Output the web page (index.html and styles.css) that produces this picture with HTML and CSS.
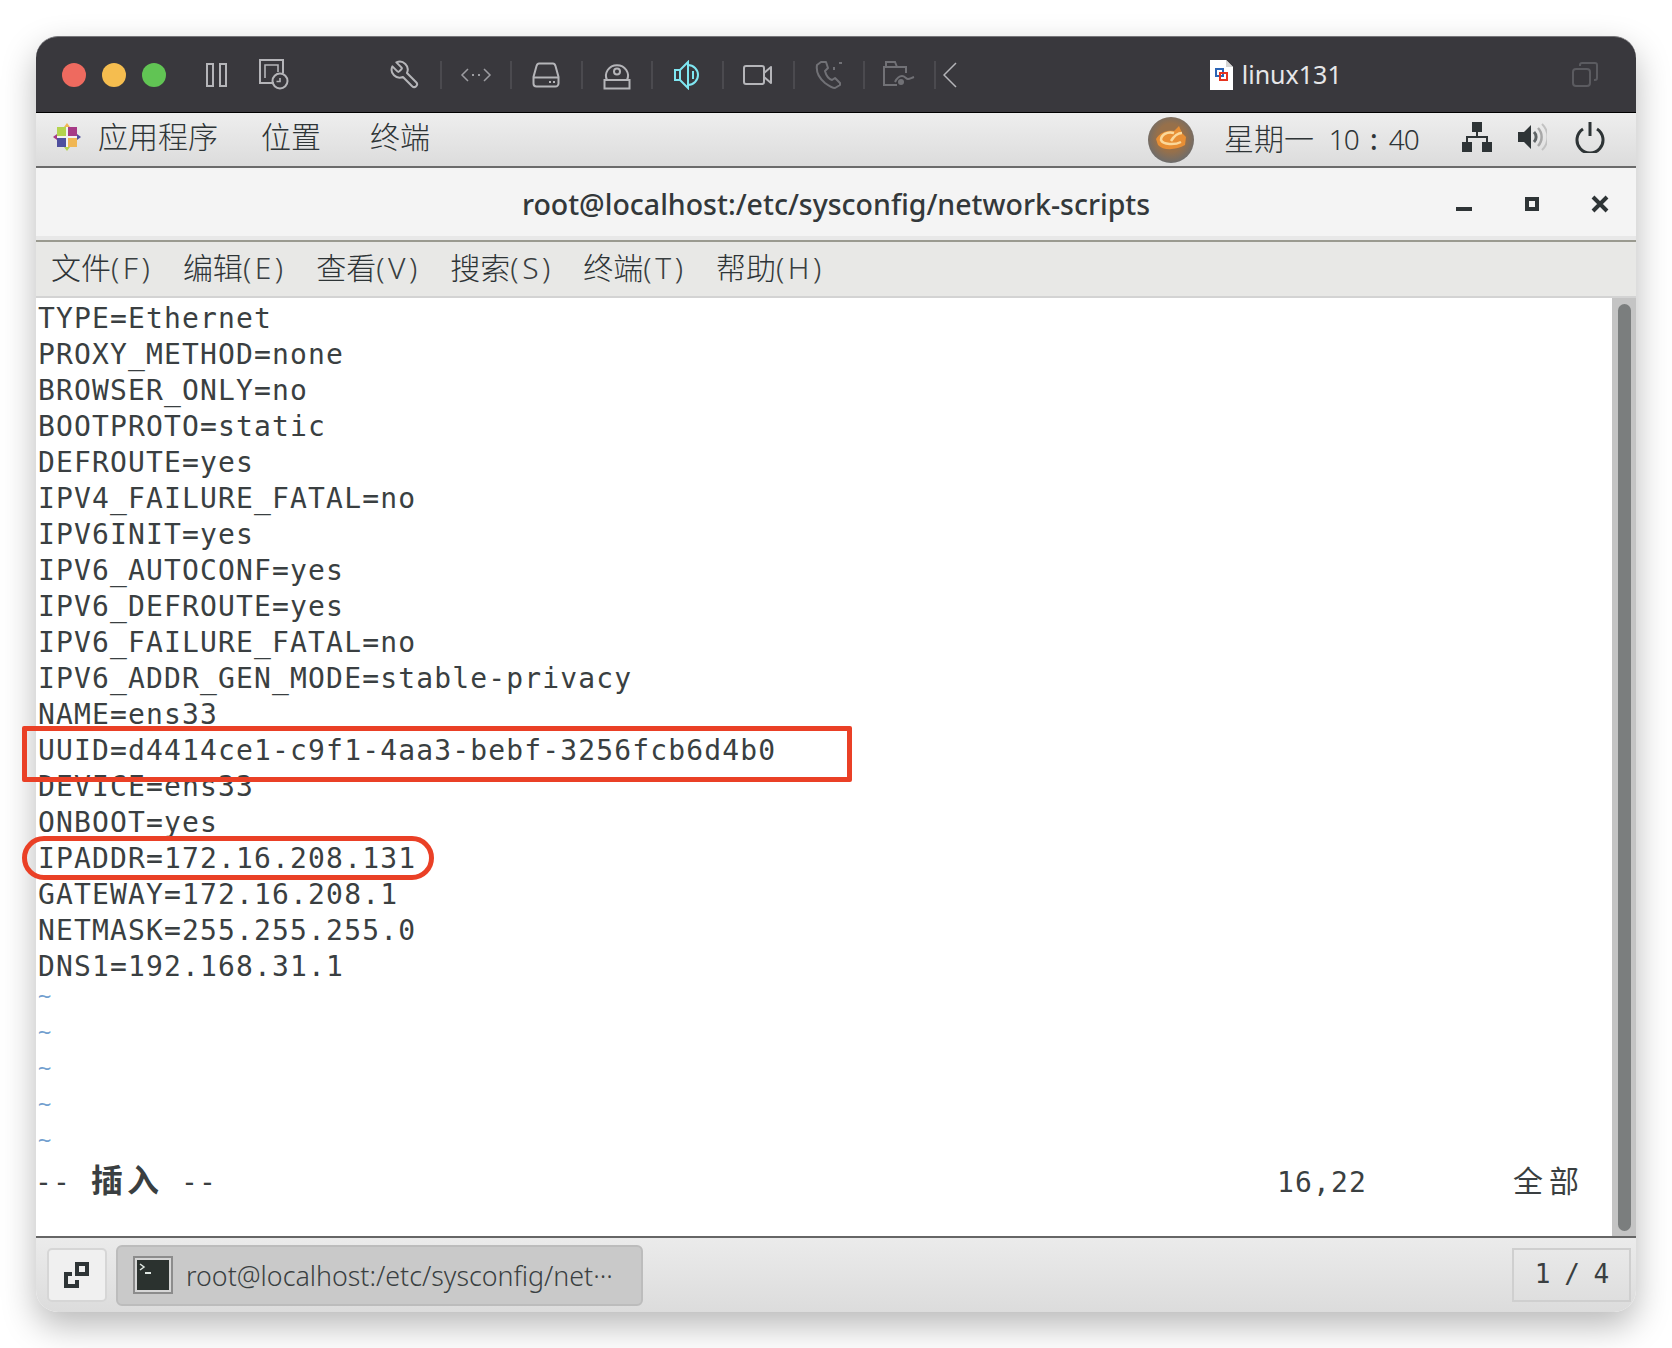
FILE: index.html
```html
<!DOCTYPE html>
<html lang="zh-CN">
<head>
<meta charset="utf-8">
<title>linux131</title>
<link rel="stylesheet" href="styles.css">
</head>
<body>
<div class="window">
  <header class="machine">
    <div class="lights"><span class="light red"></span><span class="light yellow"></span><span class="light green"></span></div>
    <svg class="m-pause" width="22" height="26" viewBox="0 0 22 26"><g fill="none" stroke="#b5b5b9" stroke-width="2"><rect x="1" y="2" width="6" height="22"/><rect x="14" y="2" width="6" height="22"/></g></svg>
    <svg class="m-snap" width="30" height="32" viewBox="0 0 30 32"><g fill="none" stroke="#b5b5b9" stroke-width="2"><path d="M15 24H1V1h23v13"/><path d="M6 19V6h13v7" stroke-width="1.6"/><circle cx="21" cy="22" r="7.5"/><path d="M21 19v3.500h-3.500" stroke-width="1.600"/></g></svg>
    <div class="tools">
      <div class="tool"><svg width="32" height="32" viewBox="0 0 24 24"><g transform="matrix(-1 0 0 1 24 0)"><path fill="none" stroke="#b5b5b9" stroke-width="1.500" stroke-linejoin="round" d="M14.700 6.300a1 1 0 0 0 0 1.400l1.600 1.600a1 1 0 0 0 1.400 0l3.770-3.770a6 6 0 0 1-7.940 7.940l-6.910 6.910a2.120 2.120 0 0 1-3-3l6.910-6.910a6 6 0 0 1 7.940-7.940l-3.760 3.760z"/></g></svg></div>
      <div class="tool"><svg width="32" height="16" viewBox="0 0 32 16"><g fill="none" stroke="#9c9ca1" stroke-width="1.500"><path d="M8 2 2 8l6 6M24 2l6 6-6 6"/></g><g fill="#9c9ca1"><rect x="12" y="7" width="2" height="2"/><rect x="18" y="7" width="2" height="2"/></g></svg></div>
      <div class="tool"><svg width="28" height="26" viewBox="0 0 28 26"><g fill="none" stroke="#b5b5b9" stroke-width="2"><path d="M7 1.500h14c1.500 0 2 1 2.500 2.500L26.500 15v6.500a3 3 0 0 1-3 3h-19a3 3 0 0 1-3-3V15L4.500 4C5 2.500 5.500 1.500 7 1.500z"/><path d="M1.500 15.500h25"/></g><g fill="#b5b5b9"><rect x="17" y="19" width="2" height="2"/><rect x="21" y="19" width="2" height="2"/></g></svg></div>
      <div class="tool"><svg width="28" height="30" viewBox="0 0 28 30"><g fill="none" stroke="#b5b5b9" stroke-width="2"><path d="M4 20a11 10.500 0 1 1 20 0"/><circle cx="14" cy="11.500" r="3"/><rect x="1.500" y="20" width="25" height="8.500"/></g></svg></div>
      <div class="tool"><svg width="28" height="30" viewBox="0 0 28 30"><g fill="none" stroke="#7fe6f2" stroke-width="2"><path d="M1 10h5v10H1z"/><path d="M6 10 14 2v26l-8-8"/><path d="M14 5a10 10 0 0 1 0 20"/><path d="M19 11v8"/></g></svg></div>
      <div class="tool"><svg width="30" height="24" viewBox="0 0 30 24"><g fill="none" stroke="#b5b5b9" stroke-width="2" stroke-linejoin="round"><rect x="1" y="3" width="20" height="18" rx="2"/><path d="M21 10l7-6v16l-7-6z"/></g></svg></div>
      <div class="tool"><svg width="28" height="30" viewBox="0 0 28 30"><g fill="none" stroke="#717176" stroke-width="2" stroke-linejoin="round"><path d="M6 2 2 5c-1 6 2 13 8 18 4 3 8 5 10 5l5-3v-2l-5-5-3 2c-3-1-6-5-7-9l3-3-2-6z"/></g><g fill="#717176"><rect x="18" y="7" width="2" height="3"/><rect x="24" y="2" width="3" height="2"/></g></svg></div>
      <div class="tool"><svg width="32" height="28" viewBox="0 0 32 28"><g fill="none" stroke="#717176" stroke-width="2"><path d="M14 24H1V6h22v6"/><path d="M3 6V1h9l2 5"/><path d="M12 21c2-4 4-6 7-6s4 3 6 3 3-1 6-2"/></g><circle cx="18" cy="21" r="3" fill="#717176"/></svg></div>
    </div>
    <svg class="m-back" width="14" height="26" viewBox="0 0 14 26"><path d="M13 1 1 13l12 12" fill="none" stroke="#b5b5b9" stroke-width="1.500"/></svg>
    <div class="m-name">
      <svg width="24" height="32" viewBox="0 0 24 32"><path fill="#fff" d="M0 1h16l7 7v23H0z"/><path fill="#d5d5d5" d="M16 1l7 7h-7z"/><rect x="6" y="10" width="7" height="7" fill="none" stroke="#2b64b5" stroke-width="2"/><rect x="10" y="14" width="7" height="7" fill="none" stroke="#e6331f" stroke-width="2"/></svg>
      <span>linux131</span>
    </div>
    <svg class="m-copy" width="26" height="26" viewBox="0 0 26 26"><g fill="none" stroke="#5b5b60" stroke-width="2"><rect x="1" y="7" width="17" height="17" rx="3"/><path d="M8 4V3a2 2 0 0 1 2-2h13a2 2 0 0 1 2 2v13a2 2 0 0 1-2 2h-1"/></g></svg>
  </header>

  <nav class="panel">
    <svg class="logo" width="30" height="30" viewBox="0 0 30 30"><rect x="5" y="5" width="9" height="9" fill="#b4d34e"/><rect x="16" y="5" width="9" height="9" fill="#a63a86"/><rect x="5" y="16" width="9" height="9" fill="#4f4f9e"/><rect x="16" y="16" width="9" height="9" fill="#f0b653"/><path d="M15 1l3 4h-6z" fill="#f0b653"/><path d="M29 15l-4 3v-6z" fill="#4f4f9e"/><path d="M15 29l-3-4h6z" fill="#b4d34e"/><path d="M1 15l4-3v6z" fill="#a63a86"/><path d="M15 5v20M5 15h20" stroke="#f2f2f2" stroke-width="2"/></svg>
    <span class="p-item first">应用程序</span>
    <span class="p-item second">位置</span>
    <span class="p-item third">终端</span>
    <div class="p-right">
      <svg class="ball" width="48" height="50" viewBox="0 0 48 50"><defs><radialGradient id="bg" cx=".5" cy=".45" r=".55"><stop offset=".55" stop-color="#97704a"/><stop offset="1" stop-color="#6c6c6c"/></radialGradient></defs><circle cx="24" cy="25" r="23" fill="url(#bg)"/><path d="M9 24c4-7 12-9 18-8l5-5 3 7 4 4-1 8c-8 5-22 6-27 0z" fill="#e88f35"/><g fill="none" stroke="#fbd89a" stroke-width="2.500" stroke-linejoin="round"><path d="M27 18c-7-2-13 2-13 7 2 5 14 5 20 2"/><path d="M35 18c-5 0-8 3-11 8"/></g></svg>
      <span class="clock">星期一 <span class="num hour">10</span><span class="colon">:</span><span class="num">40</span></span>
      <svg class="p-net" width="30" height="32" viewBox="0 0 30 32"><g fill="#2e3436"><rect x="10" y="1" width="10" height="10"/><rect x="0" y="21" width="10" height="10"/><rect x="20" y="21" width="10" height="10"/></g><path d="M15 11v5M5 21v-5h20v5" fill="none" stroke="#2e3436" stroke-width="2"/></svg>
      <svg class="p-vol" width="30" height="30" viewBox="0 0 30 30"><path d="M1 10h6l7-7v24l-7-7H1z" fill="#2e3436"/><path d="M17 10a7 7 0 0 1 0 10" fill="none" stroke="#5f6466" stroke-width="3"/><path d="M21 6a13 13 0 0 1 0 18" fill="none" stroke="#a8a8a8" stroke-width="2.500"/><path d="M25 2a18 18 0 0 1 0 26" fill="none" stroke="#c2c2c2" stroke-width="2"/></svg>
      <svg class="p-pow" width="30" height="32" viewBox="0 0 30 32"><g fill="none" stroke="#2e3436" stroke-width="3"><path d="M8 8a13 13 0 1 0 14 0"/><path d="M15 1v14"/></g></svg>
    </div>
  </nav>

  <div class="wintitle">
    <span class="wt-text">root@localhost:/etc/sysconfig/network-scripts</span>
    <div class="wt-ctrl">
      <svg width="18" height="18" viewBox="0 0 18 18"><rect x="1" y="12" width="16" height="4" fill="#2e3436"/></svg>
      <svg width="14" height="14" viewBox="0 0 14 14"><rect x="2" y="2" width="10" height="10" fill="none" stroke="#2e3436" stroke-width="4"/></svg>
      <svg width="18" height="18" viewBox="0 0 18 18"><path d="M2 2l14 14M16 2 2 16" stroke="#2e3436" stroke-width="4"/></svg>
    </div>
  </div>

  <nav class="menu">
    <span>文件<i>(F)</i></span><span>编辑<i>(E)</i></span><span>查看<i>(V)</i></span><span>搜索<i>(S)</i></span><span>终端<i>(T)</i></span><span>帮助<i>(H)</i></span>
  </nav>

  <main class="body">
    <div class="term">
      <div class="line">TYPE=Ethernet</div>
      <div class="line">PROXY_METHOD=none</div>
      <div class="line">BROWSER_ONLY=no</div>
      <div class="line">BOOTPROTO=static</div>
      <div class="line">DEFROUTE=yes</div>
      <div class="line">IPV4_FAILURE_FATAL=no</div>
      <div class="line">IPV6INIT=yes</div>
      <div class="line">IPV6_AUTOCONF=yes</div>
      <div class="line">IPV6_DEFROUTE=yes</div>
      <div class="line">IPV6_FAILURE_FATAL=no</div>
      <div class="line">IPV6_ADDR_GEN_MODE=stable-privacy</div>
      <div class="line">NAME=ens33</div>
      <div class="line">UUID=d4414ce1-c9f1-4aa3-bebf-3256fcb6d4b0</div>
      <div class="line">DEVICE=ens33</div>
      <div class="line">ONBOOT=yes</div>
      <div class="line">IPADDR=172.16.208.131</div>
      <div class="line">GATEWAY=172.16.208.1</div>
      <div class="line">NETMASK=255.255.255.0</div>
      <div class="line">DNS1=192.168.31.1</div>
      <div class="line tilde">~</div>
      <div class="line tilde">~</div>
      <div class="line tilde">~</div>
      <div class="line tilde">~</div>
      <div class="line tilde">~</div>
      <div class="line status"><span class="mode">-- <b>插入</b> --</span><span>16,22</span><span class="zh">全部</span></div>
      <div class="mark mark-box"></div>
      <div class="mark mark-round"></div>
    </div>
    <div class="scroll"><div class="thumb"></div></div>
  </main>

  <footer class="taskbar">
    <div class="show-desk"><svg width="28" height="28" viewBox="0 0 28 28"><g fill="none" stroke="#2e3436" stroke-width="4"><rect x="14" y="3" width="10" height="10"/><path d="M9 13H3v12h11v-6"/></g></svg></div>
    <div class="task">
      <svg width="40" height="38" viewBox="0 0 40 38"><rect x="1" y="1" width="38" height="36" fill="#d6d6d6" stroke="#8c8c8c" stroke-width="2"/><rect x="4" y="4" width="32" height="30" fill="#2b322f"/><path d="M7 8l4 3-4 3" fill="none" stroke="#dfe7e2" stroke-width="1.500"/><path d="M12 17h6" stroke="#dfe7e2" stroke-width="2"/></svg>
      <span>root@localhost:/etc/sysconfig/net···</span>
    </div>
    <div class="pager">1 / 4</div>
  </footer>
</div>
</body>
</html>
```

FILE: styles.css
```css
* { box-sizing: border-box; }
html, body { margin: 0; background: #fff; }
body { padding: 36px 36px 0; height: 1348px; overflow: hidden; }

.window {
  width: 1600px;
  height: 1276px;
  display: flex;
  flex-direction: column;
  border-radius: 22px;
  box-shadow: 0 14px 34px rgba(0, 0, 0, .28);
  font-family: "Noto Sans", "Noto Sans CJK SC", sans-serif;
  color: #2e3436;
}

/* machine toolbar */
.machine {
  height: 77px;
  flex: none;
  display: flex;
  align-items: center;
  padding-left: 26px;
  background: #39383d;
  border-top: 1px solid #77767a;
  border-bottom: 1px solid #000;
  border-radius: 22px 22px 0 0;
}
.lights { display: flex; gap: 16px; }
.light { width: 24px; height: 24px; border-radius: 50%; }
.red { background: #ee6a5f; }
.yellow { background: #f5bd4f; }
.green { background: #61c454; }
.m-pause { margin-left: 40px; }
.m-snap { margin-left: 31px; }
.tools { display: flex; margin-left: 82px; }
.tool {
  width: 70.6px;
  height: 28px;
  display: flex;
  align-items: center;
  justify-content: center;
  border-right: 2px solid #4b4a4f;
}
.m-back { margin-left: 7px; }
.m-name {
  display: flex;
  align-items: center;
  gap: 8px;
  margin-left: 253px;
  color: #e6e6e8;
  font-size: 25px;
}
.m-name span { padding-bottom: 2px; }
.m-copy { margin-left: 230px; }

/* GNOME panel */
.panel {
  height: 55px;
  flex: none;
  display: flex;
  align-items: center;
  padding: 0 0 6px 16px;
  background: linear-gradient(#eeeeee, #dcdcdc);
  border-bottom: 2px solid #6b6b6b;
  font-size: 30px;
}
.p-item { line-height: 44px; font-weight: 300; }
.p-item.first { margin-left: 16px; }
.p-item.second { margin-left: 43px; }
.p-item.third { margin-left: 49px; }
.p-right { margin-left: auto; display: flex; align-items: center; }
.ball { margin: 6px 29px 0 0; }
.clock { width: 195px; white-space: nowrap; font-weight: 300; }
.num { font-size: 28px; font-weight: 300; letter-spacing: -1px; }
.hour { margin-left: 7px; }
.colon { display: inline-block; width: 30px; text-align: center; font-size: 28px; font-weight: 500; }
.p-net { margin-left: 43px; }
.p-vol { margin-left: 25px; }
.p-pow { margin-left: 28px; margin-right: 31px; }

/* window title */
.wintitle {
  height: 74px;
  flex: none;
  display: flex;
  align-items: center;
  justify-content: center;
  position: relative;
  background: #f4f4f4;
  border-bottom: 2px solid #9a9a90;
  box-shadow: inset 0 -4px 0 #e8e8e8;
}
.wt-text { font-size: 28.500px; font-weight: 500; color: #33383a; }
.wt-ctrl {
  position: absolute;
  right: 27px;
  top: 27px;
  display: flex;
  align-items: center;
  gap: 52px;
}

/* menu */
.menu {
  height: 56px;
  flex: none;
  display: flex;
  align-items: center;
  gap: 29.500px;
  padding: 0 0 6px 15px;
  background: #e8e8e6;
  border-bottom: 2px solid #d3d3d3;
  font-size: 30px;
  font-weight: 300;
}
.menu i { font-style: normal; font-size: 30px; letter-spacing: 3.500px; font-weight: 300; color: #3a3f41; }

/* terminal */
.body { flex: 1; min-height: 0; display: flex; }
.term {
  flex: 1;
  position: relative;
  background: #fff;
  padding: 3px 0 0 2px;
  font-family: "DejaVu Sans Mono", "Noto Sans CJK SC", monospace;
  font-size: 28px;
  letter-spacing: 1.150px;
  color: #3a3f41;
}
.line { height: 36px; line-height: 36px; white-space: pre; }
.tilde { color: #729fcf; font-size: 22px; line-height: 22px; }
.status { display: grid; grid-template-columns: 1239px 236px auto; align-items: start; font-size: 28px; }
.mode { margin-left: -3px; }
.status b { font-family: "Noto Sans CJK SC", sans-serif; font-size: 32px; line-height: 0; margin-left: 2px; letter-spacing: 4px; font-weight: 700; }
.zh { font-family: "Noto Sans CJK SC", sans-serif; font-size: 30px; line-height: 28px; letter-spacing: 6px; }

.mark { position: absolute; border: 5px solid #ea4026; pointer-events: none; }
.mark-box { left: -14px; top: 428px; width: 830px; height: 56px; border-radius: 2px; }
.mark-round { left: -14px; top: 538px; width: 412px; height: 44px; border-radius: 22px; }

.scroll { width: 24px; flex: none; background: #c4c4c4; padding: 6px 5px 5px 6px; }
.thumb { height: 100%; background: #7b7e7e; border-radius: 7px; }

/* taskbar */
.taskbar {
  height: 76px;
  flex: none;
  display: flex;
  align-items: center;
  padding: 0 5px 0 11px;
  background: linear-gradient(#ebebeb, #dcdcdc);
  border-top: 2px solid #666;
  border-radius: 0 0 22px 22px;
}
.show-desk {
  width: 60px;
  height: 54px;
  display: flex;
  align-items: center;
  justify-content: center;
  border: 2px solid #d6d6d6;
  border-radius: 5px;
  background: #f0f0f0;
}
.task {
  width: 527px;
  height: 61px;
  margin-left: 9px;
  display: flex;
  align-items: center;
  gap: 13px;
  padding-left: 15px;
  background: #c9c9c9;
  border: 2px solid #bcbcbc;
  border-radius: 6px;
  font-size: 26.800px;
  font-weight: 300;
  color: #3a3f41;
}
.task span { white-space: nowrap; }
.pager {
  width: 119px;
  height: 54px;
  margin-left: auto;
  padding-bottom: 2px;
  display: flex;
  align-items: center;
  justify-content: center;
  border: 2px solid #cfcfcf;
  font-family: "DejaVu Sans Mono", monospace;
  font-size: 26px;
  letter-spacing: -1px;
  color: #3a3f41;
  white-space: pre;
}
```
